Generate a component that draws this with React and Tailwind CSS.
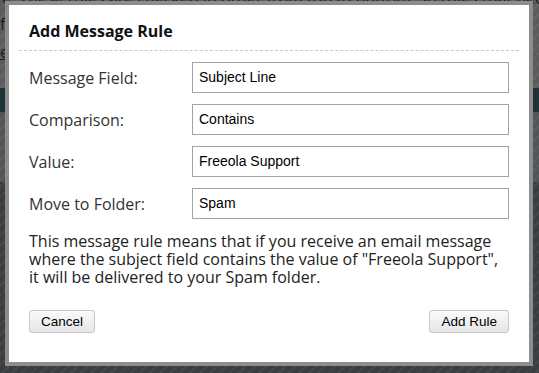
import React from 'react'

const fields = [
  { label: 'Message Field:', value: 'Subject Line' },
  { label: 'Comparison:', value: 'Contains' },
  { label: 'Value:', value: 'Freeola Support' },
  { label: 'Move to Folder:', value: 'Spam' },
]

function Button({ children }) {
  return (
    <button className="h-[23px] px-[11px] rounded-[3px] border border-[#c6c6c6] bg-gradient-to-b from-[#fafafa] to-[#e6e6e6] text-[13.5px] text-black font-['Liberation_Sans',Arial,sans-serif] leading-none">
      {children}
    </button>
  )
}

export default function App() {
  return (
    <div className="relative w-[539px] h-[373px] overflow-hidden bg-[#3c3f41] bg-[repeating-linear-gradient(135deg,#3b3e40_0px,#3b3e40_5px,#45484a_5px,#45484a_7px)] font-['Open_Sans',sans-serif]">
      {/* dimmed page behind the overlay */}
      <div className="flex flex-col">
        <div className="h-[88px] bg-[#5c5e5f] bg-[repeating-linear-gradient(135deg,#5a5c5d_0px,#5a5c5d_5px,#626465_5px,#626465_7px)]">
          <p className="-mt-[12px] pl-[2px] whitespace-nowrap text-[16px] leading-[20px] text-[#1c1c1c]">
            e: These rules are checked in order from top to bottom, so rules that need to
          </p>
          <p className="mt-[6px] whitespace-nowrap text-[16px] leading-[20px] text-[#1c1c1c]">f</p>
          <p className="mt-[8px] whitespace-nowrap text-[16px] leading-[20px] text-[#1c1c1c] underline">er</p>
        </div>
        <div className="h-[24px] bg-[#1f3236]" />
        <div className="h-[70px] bg-[#55585a] bg-[repeating-linear-gradient(135deg,#525557_0px,#525557_5px,#5b5e60_5px,#5b5e60_7px)]" />
      </div>

      {/* dialog */}
      <div className="absolute left-[5px] top-[1px] w-[528px] border-4 border-[#8d8d8d] bg-white">
        <div className="mx-[10px] px-[10px] pt-[15px] pb-[8px] border-b border-dashed border-[#c8c8c8]">
          <h2 className="text-[16px] leading-[22px] font-bold text-[#111]">Add Message Rule</h2>
        </div>
        <div className="px-[20px] pt-[11px] pb-[29px]">
          <div className="grid grid-cols-[163px_1fr] gap-y-[11px]">
            {fields.map((f) => (
              <React.Fragment key={f.label}>
                <div className="flex items-center text-[16px] text-[#333]">{f.label}</div>
                <div className="h-[31px] border border-[#a3a3a3] flex items-center px-[6px] text-[14px] text-black font-['Liberation_Sans',Arial,sans-serif]">
                  {f.value}
                </div>
              </React.Fragment>
            ))}
          </div>
          <p className="mt-[13px] text-[16px] leading-[18px] text-[#222]">
            This message rule means that if you receive an email message
            <br />
            where the subject field contains the value of "Freeola Support",
            <br />
            it will be delivered to your Spam folder.
          </p>
          <div className="mt-[24px] flex justify-between">
            <Button>Cancel</Button>
            <Button>Add Rule</Button>
          </div>
        </div>
      </div>
    </div>
  )
}
